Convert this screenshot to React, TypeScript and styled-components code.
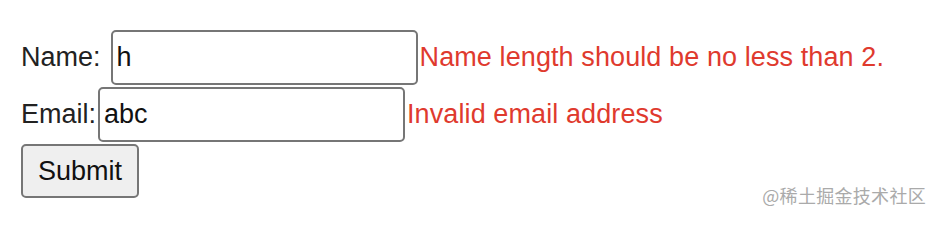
import React, { useState } from 'react';
import styled, { createGlobalStyle } from 'styled-components';

const GlobalStyle = createGlobalStyle`
  html, body {
    margin: 0;
    padding: 0;
    background: #ffffff;
  }
  body {
    width: 936px;
    height: 216px;
    overflow: hidden;
    font-family: "Liberation Sans", Arial, Helvetica, sans-serif;
    color: #222222;
  }
`;

const Page = styled.div`
  position: relative;
  width: 936px;
  height: 216px;
  box-sizing: border-box;
  padding: 30px 0 0 21px;
`;

const Form = styled.form`
  display: flex;
  flex-direction: column;
  align-items: flex-start;
  gap: 2px;
`;

const Row = styled.div`
  display: flex;
  align-items: center;
  height: 55px;
  font-size: 27px;
`;

const Label = styled.label<{ $gap: number }>`
  margin-right: ${({ $gap }) => $gap}px;
  color: #222222;
`;

const Input = styled.input`
  box-sizing: border-box;
  width: 307px;
  height: 55px;
  padding: 0 4px;
  border: 2px solid #767676;
  border-radius: 5px;
  font-family: "Liberation Sans", Arial, sans-serif;
  font-size: 27px;
  color: #111111;
  background: #ffffff;
  outline: none;
`;

const ErrorText = styled.span`
  margin-left: 2px;
  color: #df3a2e;
  font-size: 27px;
  letter-spacing: 0.1px;
`;

const Button = styled.button`
  box-sizing: border-box;
  width: 118px;
  height: 54px;
  padding: 0;
  border: 2px solid #767676;
  border-radius: 5px;
  background: #efefef;
  font-family: "Liberation Sans", Arial, sans-serif;
  font-size: 27px;
  color: #111111;
`;

const Watermark = styled.span`
  position: absolute;
  right: 10px;
  bottom: 12px;
  font-family: "Noto Sans CJK SC", "Liberation Sans", sans-serif;
  font-size: 18px;
  line-height: 1;
  color: #aaaaaa;
  letter-spacing: 0.3px;
`;

const App: React.FC = () => {
  const [name, setName] = useState('h');
  const [email, setEmail] = useState('abc');

  const nameError = name.length < 2 ? 'Name length should be no less than 2.' : '';
  const emailError = /\S+@\S+\.\S+/.test(email) ? '' : 'Invalid email address';

  return (
    <>
      <GlobalStyle />
      <Page>
        <Form onSubmit={(e) => e.preventDefault()}>
          <Row>
            <Label $gap={10} htmlFor="name">Name:</Label>
            <Input id="name" value={name} onChange={(e) => setName(e.target.value)} />
            {nameError && <ErrorText>{nameError}</ErrorText>}
          </Row>
          <Row>
            <Label $gap={2} htmlFor="email">Email:</Label>
            <Input id="email" value={email} onChange={(e) => setEmail(e.target.value)} />
            {emailError && <ErrorText>{emailError}</ErrorText>}
          </Row>
          <Button type="submit">Submit</Button>
        </Form>
        <Watermark>@稀土掘金技术社区</Watermark>
      </Page>
    </>
  );
};

export default App;
